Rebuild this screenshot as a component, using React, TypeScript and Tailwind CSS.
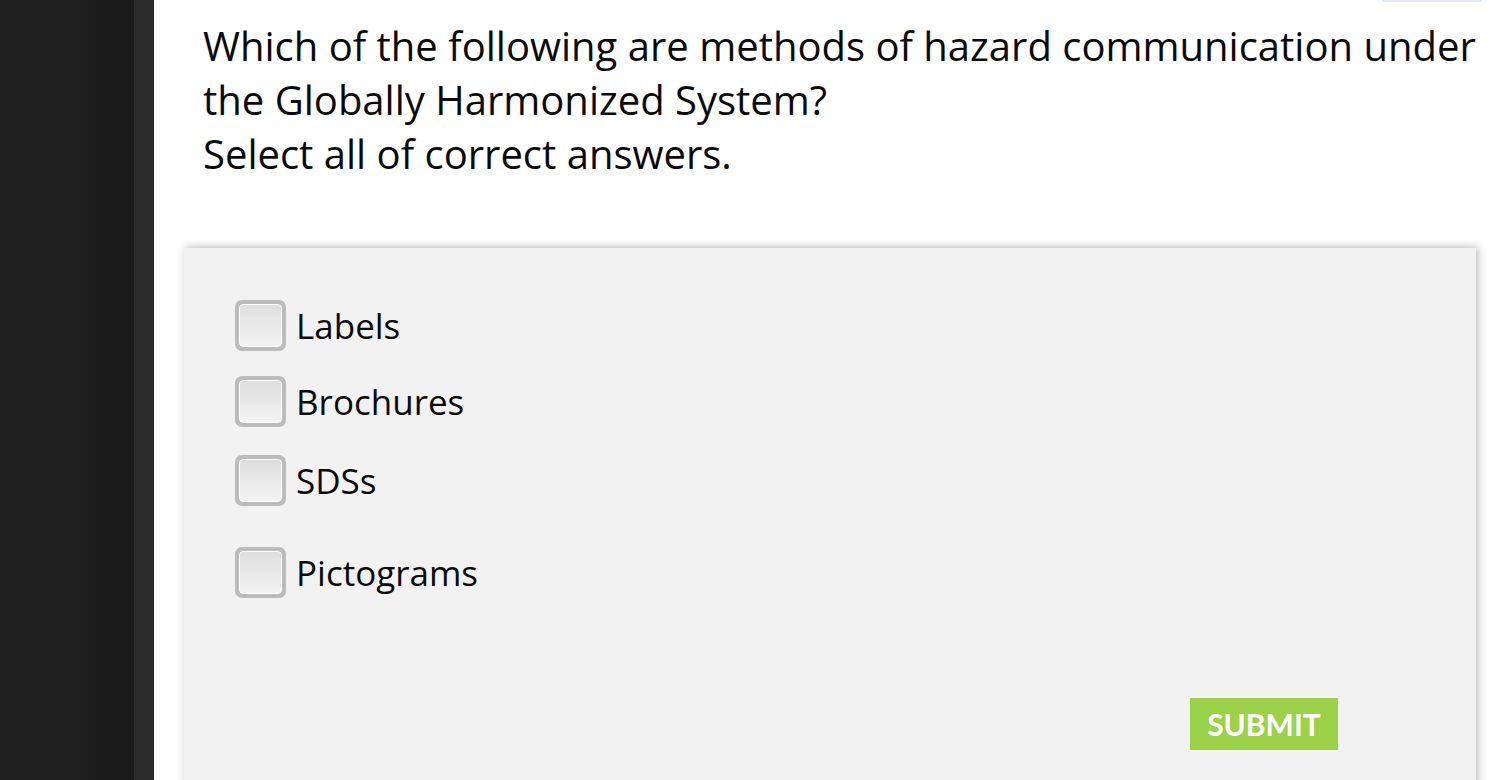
import React from "react";

const options = [
  { label: "Labels", mt: "mt-[52px]" },
  { label: "Brochures", mt: "mt-[25px]" },
  { label: "SDSs", mt: "mt-[28px]" },
  { label: "Pictograms", mt: "mt-[41px]" },
];

function Box() {
  return (
    <span className="w-[51px] h-[51px] shrink-0 rounded-[7px] border-[4px] border-[#bcbcbc] bg-[#bcbcbc] p-0">
      <span className="block w-full h-full rounded-[4px] border border-white bg-gradient-to-b from-[#dedede] to-[#f3f3f3]" />
    </span>
  );
}

export default function App() {
  return (
    <div className="w-[1504px] h-[780px] overflow-hidden flex bg-white" style={{ fontFamily: '"Open Sans", sans-serif' }}>
      <div className="w-[134px] h-full bg-gradient-to-r from-[#1f1f1f] via-[#1f1f1f] to-[#1a1a1a]" />
      <div className="w-[20px] h-full bg-[#2a2a2a]" />
      <div className="flex-1 relative">
        <div className="absolute top-0 left-[1228px] w-[100px] h-[2px] bg-[#dfeaf7]" />
        <div className="pl-[49px] pr-[20px] pt-[19px] text-[40px] leading-[54px] text-[#0a0a0a]">
          <p>Which of the following are methods of hazard communication under the Globally Harmonized System?</p>
          <p>Select all of correct answers.</p>
        </div>
        <div className="ml-[30px] mt-[67px] w-[1292px] h-[600px] bg-[#f2f2f2] shadow-[2px_-1px_8px_rgba(0,0,0,0.28)] flex flex-col">
          <div className="pl-[51px] flex flex-col">
            {options.map((o) => (
              <label key={o.label} className={`flex items-center gap-[10px] ${o.mt}`}>
                <Box />
                <span className="text-[35px] leading-[50px] text-[#0a0a0a]">{o.label}</span>
              </label>
            ))}
          </div>
          <div className="flex justify-end pr-[138px] mt-[100px]">
            <button
              className="w-[148px] h-[52px] bg-[#9bd24a] text-white font-bold text-[30px] leading-[52px] text-center"
              style={{ fontFamily: 'Lato, sans-serif' }}
            >
              SUBMIT
            </button>
          </div>
        </div>
      </div>
    </div>
  );
}
